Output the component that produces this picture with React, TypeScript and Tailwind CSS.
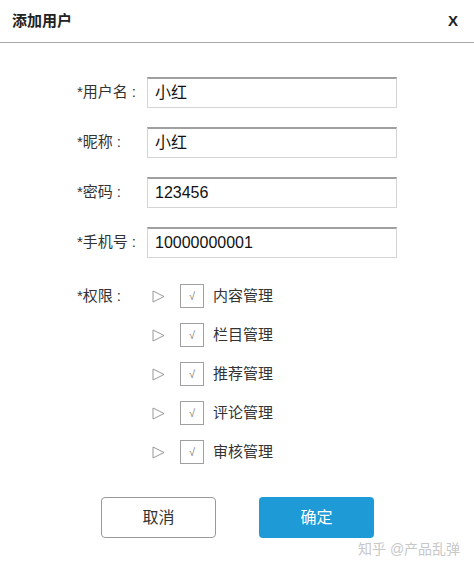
import React from "react";

const font = { fontFamily: '"Liberation Sans", "Noto Sans CJK SC", sans-serif' };

function Label({ text }: { text: string }) {
  return (
    <span>
      {text}
      <span className="ml-[4px]">:</span>
    </span>
  );
}

function Field({ label, value }: { label: string; value: string }) {
  return (
    <div className="flex items-center h-[31px]">
      <div className="w-[70px] text-[15px] text-[#333]">
        <Label text={label} />
      </div>
      <div className="w-[250px] h-[31px] border border-[#d4d4d4] border-t-[#a0a0a0] border-t-2 flex items-center pl-[7px] text-[16px] text-[#111]">
        {value}
      </div>
    </div>
  );
}

function Perm({ name }: { name: string }) {
  return (
    <div className="flex items-center h-[24px]">
      <svg width="13" height="13" viewBox="0 0 13 13" className="mr-[15px]">
        <path d="M1 1 L12 6.5 L1 12 Z" fill="none" stroke="#999" strokeWidth="1" />
      </svg>
      <div className="w-[24px] h-[24px] border border-[#a0a0a0] flex items-center justify-center text-[11px] text-[#777]">√</div>
      <div className="ml-[9px] text-[15px] text-[#333]">{name}</div>
    </div>
  );
}

export default function App() {
  return (
    <div className="w-[474px] h-[567px] bg-white relative overflow-hidden" style={font}>
      <div className="h-[43px] flex items-center justify-between px-[12px] border-b border-[#a8a8a8]">
        <div className="text-[15px] font-bold text-[#222]">添加用户</div>
        <div className="text-[15px] font-bold text-[#222] mr-[4px]">X</div>
      </div>
      <div className="pl-[77px] pt-[34px] flex flex-col gap-[19px]">
        <Field label="*用户名" value="小红" />
        <Field label="*昵称" value="小红" />
        <Field label="*密码" value="123456" />
        <Field label="*手机号" value="10000000001" />
      </div>
      <div className="pl-[77px] pt-[26px] flex">
        <div className="w-[75px] text-[15px] text-[#333] leading-[24px]">
          <Label text="*权限" />
        </div>
        <div className="flex flex-col gap-[15px]">
          <Perm name="内容管理" />
          <Perm name="栏目管理" />
          <Perm name="推荐管理" />
          <Perm name="评论管理" />
          <Perm name="审核管理" />
        </div>
      </div>
      <div className="pl-[101px] pt-[33px] flex gap-[43px]">
        <button className="w-[115px] h-[41px] border border-[#999] rounded-[4px] bg-white text-[16px] text-[#333]">取消</button>
        <button className="w-[115px] h-[41px] rounded-[4px] bg-[#1e9ad6] text-[16px] text-white">确定</button>
      </div>
      <div className="absolute left-[358px] top-[539px] text-[14px] text-[#c8c8c8]">知乎 @产品乱弹</div>
    </div>
  );
}
